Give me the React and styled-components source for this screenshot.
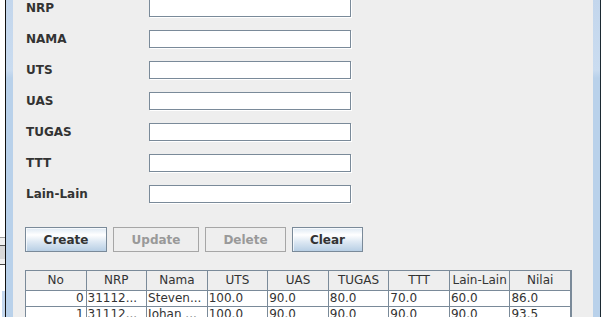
import React from "react";
import styled, { createGlobalStyle } from "styled-components";

const colors = {
	panel: "#eeeeee",
	text: "#333333",
	muted: "#999999",
	line: "#7a8a99",
	frame: "#b9d1ea",
	frameLight: "#cadcf0",
};

const GlobalStyle = createGlobalStyle`
	html, body {
		margin: 0;
		padding: 0;
		background: #ffffff;
	}
	body {
		font-family: "DejaVu Sans", "Liberation Sans", sans-serif;
	}
`;

//! Window frame

const Screen = styled.div`
	display: flex;
	width: 604px;
	height: 317px;
	overflow: hidden;
`;

// the window behind ours, only a few pixels of it show
const BackWindow = styled.div`
	width: 5px;
	display: flex;
	flex-direction: column;
	background: #ffffff;
`;

const BackStrip = styled.div`
	height: ${(props) => props.$h}px;
	background: ${(props) => props.$bg || "#ffffff"};
	border-top: ${(props) => (props.$line ? `1px solid ${props.$line}` : "none")};
	border-left: ${(props) => (props.$inset ? `2px solid #ffffff` : "none")};
	flex-shrink: 0;
`;

const EdgeLine = styled.div`
	width: 1px;
	background: ${(props) => props.$color || "#111111"};
`;

const FrameBorder = styled.div`
	width: 7px;
	background: linear-gradient(
		to bottom,
		#c3d6ec 0px,
		${colors.frameLight} 70px,
		${colors.frame} 78px,
		${colors.frame} 100%
	);
`;

const Desktop = styled.div`
	width: 3px;
	background: #ffffff;
`;

const Content = styled.div`
	flex: 1;
	background: ${colors.panel};
	display: flex;
	flex-direction: column;
	padding-left: 12px;
`;

//! Form

const Form = styled.div`
	display: grid;
	grid-template-columns: 123px 202px;
	row-gap: 13px;
	align-items: center;
	margin-top: -1px;
	padding-left: 1px;
`;

const Label = styled.label`
	font-size: 12px;
	font-weight: bold;
	color: ${colors.text};
	line-height: 18px;
`;

const Field = styled.div`
	box-sizing: border-box;
	height: 18px;
	width: 202px;
	background: #ffffff;
	border: 1px solid ${colors.line};
	box-shadow: 1px 1px 0 #ffffff;
`;

//! Buttons

const ButtonRow = styled.div`
	display: flex;
	gap: 6px;
	margin-top: 24px;
`;

const Button = styled.button`
	box-sizing: border-box;
	width: ${(props) => props.$w}px;
	height: 25px;
	padding: 0;
	font-family: "DejaVu Sans", "Liberation Sans", sans-serif;
	font-size: 12px;
	font-weight: bold;
	color: ${colors.text};
	border: 1px solid ${colors.line};
	background: linear-gradient(
		to bottom,
		#dde8f3 0%,
		#ffffff 30%,
		#dde8f3 60%,
		#b8cfe5 100%
	);
	box-shadow: inset 1px 1px 0 rgba(255, 255, 255, 0.7);

	&:disabled {
		color: ${colors.muted};
		border-color: #a6a6a6;
		background: ${colors.panel};
		box-shadow: none;
	}
`;

//! Table

const TableWrap = styled.div`
	box-sizing: border-box;
	width: 547px;
	margin-top: 18px;
	border-top: 1px solid ${colors.line};
	border-left: 1px solid ${colors.line};
	border-right: 1px solid ${colors.line};
	display: grid;
	grid-template-columns: repeat(9, 1fr);
`;

const HeadCell = styled.div`
	height: 19px;
	line-height: 18px;
	font-size: 12px;
	color: ${colors.text};
	text-align: center;
	background: ${colors.panel};
	border-right: 1px solid ${colors.line};
	border-bottom: 1px solid ${colors.line};
	white-space: nowrap;
	overflow: hidden;
`;

const Cell = styled.div`
	box-sizing: border-box;
	height: 16px;
	line-height: 15px;
	font-size: 12px;
	color: ${colors.text};
	background: #ffffff;
	text-align: ${(props) => (props.$right ? "right" : "left")};
	padding: 0 2px 0 1px;
	border-right: 1px solid ${colors.line};
	border-bottom: 1px solid ${colors.line};
	white-space: nowrap;
	overflow: hidden;
`;

const fields = ["NRP", "NAMA", "UTS", "UAS", "TUGAS", "TTT", "Lain-Lain"];

const columns = ["No", "NRP", "Nama", "UTS", "UAS", "TUGAS", "TTT", "Lain-Lain", "Nilai"];

const rows = [
	["0", "31112...", "Steven...", "100.0", "90.0", "80.0", "70.0", "60.0", "86.0"],
	["1", "31112...", "Johan ...", "100.0", "90.0", "90.0", "90.0", "90.0", "93.5"],
];

export default function App() {
	return (
		<>
			<GlobalStyle />
			<Screen>
				<BackWindow>
					<BackStrip $h={237} />
					<BackStrip $h={7} $bg="#f0f0f0" $line="#a0a0a0" />
					<BackStrip $h={13} $bg="#d8d8d8" $line="#555555" />
					<BackStrip $h={5} $bg="#f0f0f0" />
					<BackStrip $h={26} $line="#444444" />
					<BackStrip $h={29} $bg="#c5d8ee" $inset />
				</BackWindow>
				<EdgeLine />
				<FrameBorder />
				<Content>
					<Form>
						{fields.map((name) => (
							<React.Fragment key={name}>
								<Label>{name}</Label>
								<Field />
							</React.Fragment>
						))}
					</Form>

					<ButtonRow>
						<Button $w={82}>Create</Button>
						<Button $w={86} disabled>
							Update
						</Button>
						<Button $w={81} disabled>
							Delete
						</Button>
						<Button $w={71}>Clear</Button>
					</ButtonRow>

					<TableWrap>
						{columns.map((c) => (
							<HeadCell key={c}>{c}</HeadCell>
						))}
						{rows.map((row, r) =>
							row.map((v, i) => (
								<Cell key={`${r}-${i}`} $right={i === 0}>
									{v}
								</Cell>
							))
						)}
					</TableWrap>
				</Content>
				<FrameBorder />
				<EdgeLine $color="#1c2a33" />
				<Desktop />
			</Screen>
		</>
	);
}
